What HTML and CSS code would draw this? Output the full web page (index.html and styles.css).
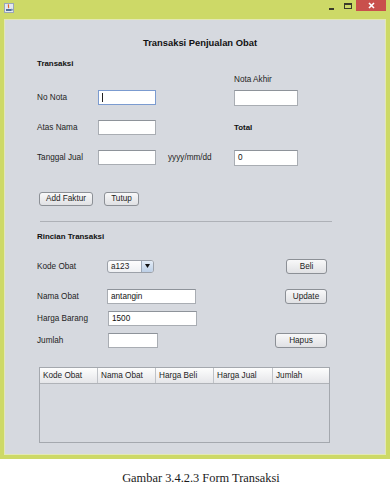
FILE: index.html
```html
<!DOCTYPE html>
<html lang="id">
<head>
    <meta charset="UTF-8">
    <title>Transaksi Penjualan Obat</title>
    <link rel="stylesheet" href="styles.css">
</head>
<body>
    <div class="window">
        <div class="titlebar">
            <svg class="app-icon" width="10" height="10" viewBox="0 0 10 10">
                <rect x="0.5" y="0.5" width="9" height="9" fill="#e4e9f0" stroke="#9aa7b8"/>
                <path d="M4 1.5 C5.5 3 3.5 3.5 5 5" stroke="#e0662a" stroke-width="1.2" fill="none"/>
                <path d="M2 6 H7 V8 H2 Z" fill="#4f6f9c"/>
                <path d="M7 6.3 H8.3 V7.3 H7" stroke="#4f6f9c" stroke-width="0.8" fill="none"/>
            </svg>
            <div class="controls">
                <span class="ctl-min"></span>
                <span class="ctl-max"></span>
                <span class="ctl-close">
                    <svg width="7" height="7" viewBox="0 0 7 7">
                        <path d="M1 1 L6 6 M6 1 L1 6" stroke="#fff" stroke-width="1.6"/>
                    </svg>
                </span>
            </div>
        </div>
        <div class="panel">
            <h1 class="title">Transaksi Penjualan Obat</h1>

            <!-- bagian faktur -->
            <div class="head-grid">
                <div class="group-label r1">Transaksi</div>
                <div class="lbl r2 c5">Nota Akhir</div>

                <div class="lbl r3 c1">No Nota</div>
                <div class="field focus r3 c2"><span class="caret"></span></div>
                <div class="field r3 c5"></div>

                <div class="lbl r4 c1">Atas Nama</div>
                <div class="field r4 c2"></div>
                <div class="group-label r4 c5">Total</div>

                <div class="lbl r5 c1">Tanggal Jual</div>
                <div class="field r5 c2"></div>
                <div class="lbl r5 c4">yyyy/mm/dd</div>
                <div class="field r5 c5">0</div>
            </div>

            <div class="button-row">
                <button class="btn btn-add">Add Faktur</button>
                <button class="btn btn-close">Tutup</button>
            </div>

            <div class="separator"></div>

            <!-- rincian -->
            <div class="group-label rincian">Rincian Transaksi</div>

            <div class="row row-kode">
                <span class="row-label">Kode Obat</span>
                <div class="combo">
                    <span class="combo-text">a123</span>
                    <span class="combo-arrow">
                        <svg width="5" height="4" viewBox="0 0 5 4"><path d="M0 0 H5 L2.5 4 Z" fill="#111"/></svg>
                    </span>
                </div>
                <button class="btn btn-beli">Beli</button>
            </div>

            <div class="row row-nama">
                <span class="row-label">Nama Obat</span>
                <div class="field wide">antangin</div>
                <button class="btn btn-update">Update</button>
            </div>

            <div class="row row-harga">
                <span class="row-label">Harga Barang</span>
                <div class="field wide shift">1500</div>
            </div>

            <div class="row row-jumlah">
                <span class="row-label">Jumlah</span>
                <div class="field small shift"></div>
                <button class="btn btn-hapus">Hapus</button>
            </div>

            <div class="table">
                <div class="table-head">
                    <span>Kode Obat</span>
                    <span>Nama Obat</span>
                    <span>Harga Beli</span>
                    <span>Harga Jual</span>
                    <span>Jumlah</span>
                </div>
            </div>
        </div>
    </div>
    <p class="caption">Gambar 3.4.2.3 Form Transaksi</p>
</body>
</html>
```

FILE: styles.css
```css
body {
    margin: 0;
    background: #fff;
    font-family: "Liberation Sans", Arial, sans-serif;
    color: #1e1e1e;
}
.window {
    width: 390px;
    box-sizing: border-box;
    padding: 0 4px 4px 4px;
    background: #cdd967;
}
.titlebar {
    height: 19px;
    display: flex;
    align-items: flex-start;
}
.app-icon {
    margin-top: 3px;
}
.controls {
    margin-left: auto;
    display: flex;
    align-items: flex-start;
}
.ctl-min {
    width: 5px;
    height: 2px;
    margin-top: 8px;
    background: #3a3a2a;
}
.ctl-max {
    width: 8px;
    height: 6px;
    margin-top: 3px;
    margin-left: 10px;
    box-sizing: border-box;
    border: 1px solid #3a3a2a;
    border-top-width: 2px;
}
.ctl-close {
    width: 30px;
    height: 11px;
    margin-left: 4px;
    background: #c9504c;
    display: flex;
    align-items: center;
    justify-content: center;
}
.panel {
    height: 436px;
    box-sizing: border-box;
    border: 1px solid #e3e8b4;
    background: #d6d9df;
    padding-left: 32px;
    font-size: 8.2px;
}
.title {
    margin: 0;
    padding: 15px 0 5px 10px;
    margin-left: -32px;
    text-align: center;
    font-size: 9.4px;
    line-height: 16px;
    font-weight: bold;
    color: #111;
}
.head-grid {
    display: grid;
    grid-template-columns: 61px 58px 12px 66px 64px;
    grid-template-rows: 16px 18px 30px 30px 16px;
    line-height: 16px;
}
.group-label {
    font-weight: bold;
    font-size: 7.9px;
    color: #111;
}
.lbl {
    line-height: 15px;
}
.r1 { grid-row: 1; grid-column: 1 / 3; }
.r2 { grid-row: 2; }
.r3 { grid-row: 3; }
.r4 { grid-row: 4; }
.r5 { grid-row: 5; }
.c1 { grid-column: 1; }
.c2 { grid-column: 2; }
.c4 { grid-column: 4; }
.c5 { grid-column: 5; }
.field {
    height: 15px;
    box-sizing: border-box;
    background: #fff;
    border: 1px solid #a9adb3;
    border-top-color: #8e939a;
    padding-left: 3px;
    line-height: 13px;
    color: #111;
}
.head-grid .field {
    align-self: start;
}
.head-grid .c5.field {
    height: 16px;
}
.field.focus {
    border-color: #7b9bd0;
}
.caret {
    display: inline-block;
    width: 1px;
    height: 9px;
    margin-top: 2px;
    background: #222;
}
.button-row {
    margin-top: 26px;
    margin-left: 2px;
    display: flex;
    gap: 11px;
}
.btn {
    height: 14px;
    box-sizing: border-box;
    padding: 0;
    border: 1px solid #8c9096;
    border-radius: 3px;
    background: linear-gradient(#f8f8f9, #e0e1e4);
    font-family: "Liberation Sans", Arial, sans-serif;
    font-size: 8.2px;
    line-height: 12px;
    color: #1e1e1e;
}
.btn-add { width: 54px; }
.btn-close { width: 35px; }
.separator {
    margin-top: 15px;
    margin-left: 3px;
    width: 292px;
    height: 1px;
    background: #aeb1b7;
}
.rincian {
    margin-top: 8px;
    line-height: 14px;
}
.row {
    width: 290px;
    display: flex;
    align-items: center;
}
.row .btn {
    margin-left: auto;
    height: 15px;
    line-height: 13px;
}
.row-label {
    width: 70px;
}
.row-kode { margin-top: 14px; height: 16px; }
.row-nama { margin-top: 14px; height: 16px; }
.row-harga { margin-top: 6px; height: 16px; }
.row-jumlah { margin-top: 7px; height: 15px; }
.field.wide { width: 89px; }
.field.small { width: 50px; }
.field.shift { margin-left: 1px; }
.combo {
    width: 47px;
    height: 13px;
    box-sizing: border-box;
    border: 1px solid #9ca1a9;
    border-radius: 3px;
    background: linear-gradient(#fdfdfd, #eef0f3);
    display: flex;
    overflow: hidden;
}
.combo-text {
    flex: 1;
    padding-left: 3px;
    line-height: 11px;
}
.combo-arrow {
    width: 11px;
    border-left: 1px solid #9aa6b6;
    background: linear-gradient(#e3ecf7, #bccfe6);
    display: flex;
    align-items: center;
    justify-content: center;
}
.btn-beli { width: 41px; }
.btn-update { width: 42px; }
.btn-hapus { width: 52px; }
.table {
    margin-top: 19px;
    margin-left: 2px;
    width: 291px;
    height: 76px;
    box-sizing: border-box;
    border: 1px solid #a4a8ae;
}
.table-head {
    display: grid;
    grid-template-columns: 58px 58px 58px 59px 1fr;
    height: 16px;
    box-sizing: border-box;
    background: linear-gradient(#fdfdfd, #e5e6e9);
    border-bottom: 1px solid #b0b3b8;
}
.table-head span {
    padding-left: 3px;
    line-height: 15px;
    border-right: 1px solid #bfc2c7;
}
.table-head span:last-child {
    border-right: none;
}
.caption {
    margin: 12px 0 0;
    padding-left: 10px;
    text-align: center;
    font-family: "Liberation Serif", "Times New Roman", serif;
    font-size: 12.4px;
    line-height: 14px;
    color: #1a1a1a;
}
```
